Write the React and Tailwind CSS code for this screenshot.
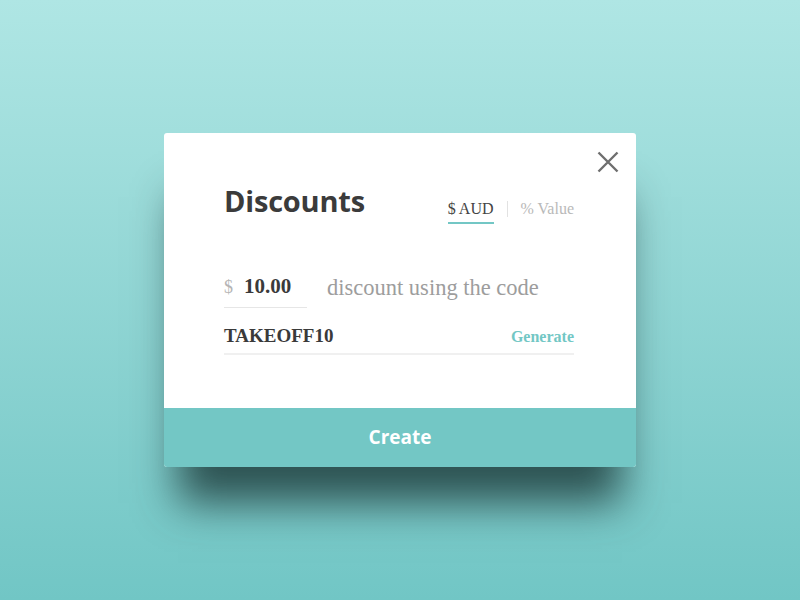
export default function App() {
  return (
    <div className="w-[800px] h-[600px] bg-gradient-to-b from-[#afe6e4] to-[#71c6c5] flex items-start justify-center pt-[133px]">
      <div className="relative w-[472px] bg-white rounded-[3px] shadow-[0_50px_40px_-14px_rgba(30,60,60,0.85)]">
        {/* Close */}
        <button className="absolute right-[17px] top-[18px] w-[22px] h-[22px] text-[#6e6e6e]">
          <svg viewBox="0 0 22 22" className="w-[22px] h-[22px]" fill="none" stroke="currentColor" strokeWidth="2.4" strokeLinecap="butt">
            <path d="M1.5 1.5 L20.5 20.5 M20.5 1.5 L1.5 20.5" />
          </svg>
        </button>

        <div className="pl-[60px] pr-[62px] pt-[48px] pb-[53px]">
          {/* Header */}
          <div className="flex items-end justify-between">
            <h1 className="font-['Open_Sans'] font-bold text-[29px] leading-[40px] tracking-[-0.2px] text-[#3b3b3b]">
              Discounts
            </h1>
            <div className="flex items-center font-['Liberation_Serif'] text-[16px] mb-[-3px]">
              <span className="text-[#444] border-b-2 border-[#73c7c5] pb-[3px] leading-[20px]">$ AUD</span>
              <span className="mx-[13px] w-px h-[16px] bg-[#e2e2e2] mb-[5px]" />
              <span className="text-[#b9b9b9] pb-[5px] leading-[20px]">% Value</span>
            </div>
          </div>

          {/* Amount */}
          <div className="mt-[50px] flex items-end font-['Liberation_Serif']">
            <div className="flex items-baseline w-[83px] border-b border-[#e6e6e6] pb-[4px]">
              <span className="text-[#b5b5b5] text-[18px]">$</span>
              <span className="ml-[11px] text-[#3a3a3a] text-[21px] font-bold">10.00</span>
            </div>
            <span className="ml-[20px] pb-[5px] text-[#9d9d9d] text-[22.5px] leading-[30px]">discount using the code</span>
          </div>

          {/* Code */}
          <div className="mt-[16px] flex items-baseline justify-between border-b-2 border-[#f0f0f0] pb-[4px] font-['Liberation_Serif']">
            <span className="text-[#3a3a3a] text-[19px] font-bold leading-[24px]">TAKEOFF10</span>
            <span className="text-[#73c7c5] text-[16px] font-bold">Generate</span>
          </div>
        </div>

        {/* Footer */}
        <button className="w-full h-[59px] bg-[#73c7c5] rounded-b-[3px] flex items-center justify-center font-['Open_Sans'] font-bold text-[19px] text-white">
          Create
        </button>
      </div>
    </div>
  );
}
